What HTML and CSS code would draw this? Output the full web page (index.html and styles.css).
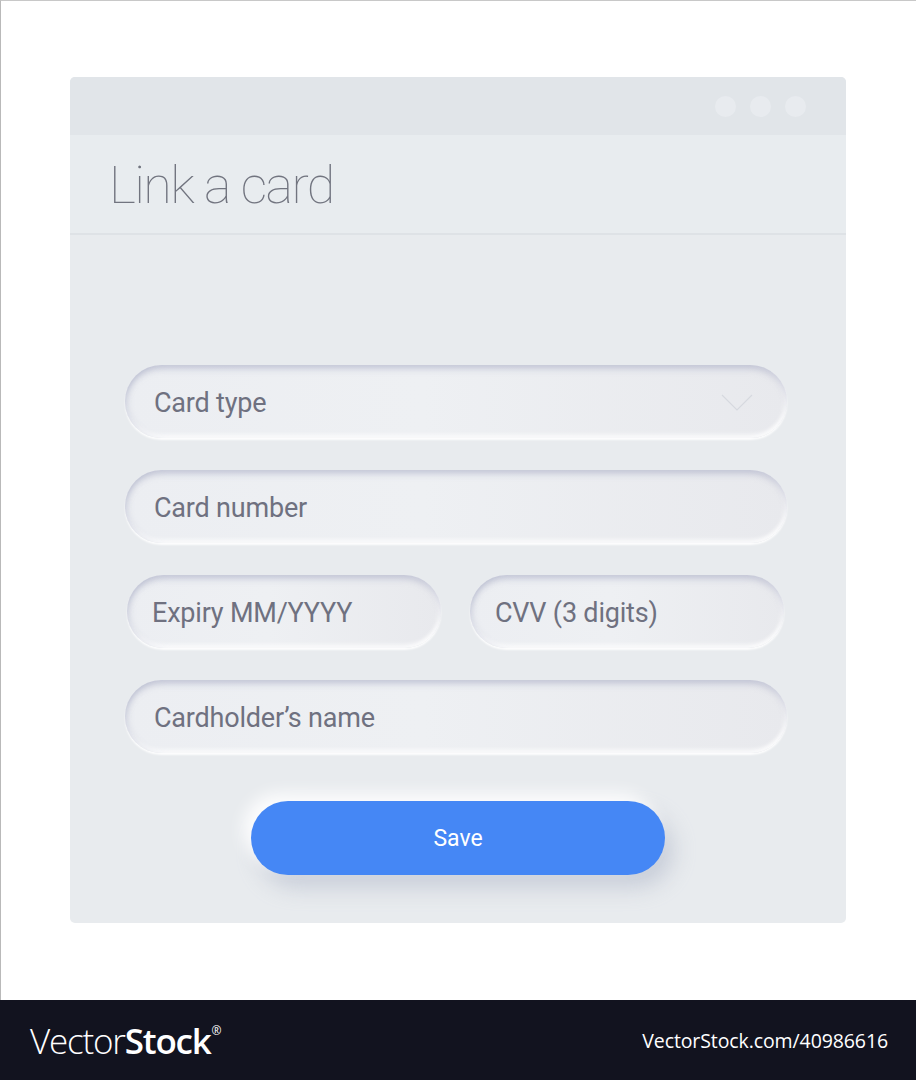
FILE: index.html
```html
<!DOCTYPE html>
<html>
<head>
<meta charset="utf-8">
<link rel="stylesheet" href="styles.css">
</head>
<body>
<div class="canvas">
  <div class="window">
    <div class="titlebar">
      <span class="dot"></span><span class="dot"></span><span class="dot"></span>
    </div>
    <div class="header">
      <h1 class="title">Link a card</h1>
    </div>
    <div class="content">
      <div class="form">
        <div class="field field-select">
          <span class="label">Card type</span>
          <svg class="chev" width="32" height="20" viewBox="0 0 32 20"><path d="M1 2 L16 17 L31 2" fill="none" stroke="#d6d9df" stroke-width="1.2"/></svg>
        </div>
        <div class="field"><span class="label">Card number</span></div>
        <div class="row">
          <div class="field field-half"><span class="label">Expiry MM/YYYY</span></div>
          <div class="field field-half"><span class="label">CVV (3 digits)</span></div>
        </div>
        <div class="field"><span class="label">Cardholder’s name</span></div>
      </div>
      <div class="actions">
        <button class="save">Save</button>
      </div>
    </div>
  </div>
</div>
<div class="footer">
  <div class="brand"><span class="b-light">Vector</span><span class="b-bold">Stock</span><sup class="reg">®</sup></div>
  <div class="ref">VectorStock.com/40986616</div>
</div>
</body>
</html>
```
FILE: styles.css
```css
* { box-sizing: border-box; }
html, body { margin: 0; padding: 0; }
body { background: #fff; font-family: Roboto, "Liberation Sans", sans-serif; width: 916px; height: 1080px; overflow: hidden; }

.canvas {
  height: 1000px;
  border-left: 1px solid #b9b9b9;
  border-top: 1px solid #c8c8c8;
  padding: 76px 0 0 69px;
}
.window {
  width: 776px;
  height: 846px;
  border-radius: 5px;
  overflow: hidden;
  background: #e8ebee;
  display: flex;
  flex-direction: column;
}
.titlebar {
  height: 58px;
  background: #e1e5e9;
  display: flex;
  align-items: center;
  justify-content: flex-end;
  gap: 14px;
  padding-right: 40px;
}
.dot { width: 21px; height: 21px; border-radius: 50%; background: #e8ebef; }
.header {
  height: 100px;
  background: #e8ecef;
  border-bottom: 2px solid #dee2e6;
  padding-left: 39px;
  display: flex;
  align-items: center;
}
.title {
  margin: 0;
  font-family: Roboto, sans-serif;
  font-weight: 100;
  font-size: 52px;
  letter-spacing: -1.6px;
  color: #71747f;
  line-height: 1;
  padding-top: 4px;
}
.content {
  flex: 1;
  padding: 130px 59px 0 55px;
  display: flex;
  flex-direction: column;
}
.form { display: flex; flex-direction: column; gap: 32px; }
.row { display: grid; grid-template-columns: 1fr 1fr; gap: 29px; padding: 0 3px 0 2px; }
.field {
  height: 73px;
  border-radius: 37px;
  background: linear-gradient(90deg, #eceef2 0%, #eef0f3 45%, #e8e9ed 100%);
  box-shadow:
    inset 0 6px 6px -2px rgba(165,170,194,0.55),
    inset 5px 0 6px -3px rgba(180,184,204,0.45),
    inset 0 -4px 4px -1px rgba(255,255,255,0.95),
    inset -4px 0 5px -2px rgba(255,255,255,0.7),
    0 2px 2px rgba(255,255,255,0.9);
  display: flex;
  align-items: center;
  padding: 0 34px 0 29px;
}
.field-half { padding-left: 25px; }
.label {
  font-size: 27px;
  color: #6f7180;
  letter-spacing: -0.2px;
  padding-top: 2px;
}
.field-select { justify-content: space-between; }
.chev { margin-top: 2px; }
.actions { display: flex; justify-content: center; padding-top: 48px; padding-left: 4px; }
.save {
  width: 414px;
  height: 74px;
  border: none;
  border-radius: 37px;
  background: #4587f5;
  color: #fff;
  font-family: Roboto, sans-serif;
  font-size: 23px;
  font-weight: 400;
  box-shadow: -8px -8px 16px rgba(255,255,255,0.9), 8px 12px 22px rgba(160,168,190,0.45);
}
.footer {
  height: 80px;
  background: #12131f;
  display: flex;
  align-items: center;
  justify-content: space-between;
  padding: 0 28px 0 30px;
  color: #fff;
}
.brand { font-family: "Open Sans", sans-serif; font-size: 35px; letter-spacing: -1.2px; line-height: 1; display: flex; align-items: flex-start; }
.b-light { font-weight: 300; }
.b-bold { font-weight: 600; }
.reg { font-size: 12px; margin-left: 1px; margin-top: 2px; }
.ref { font-family: "Open Sans", sans-serif; font-size: 19.5px; letter-spacing: -0.1px; }
```
